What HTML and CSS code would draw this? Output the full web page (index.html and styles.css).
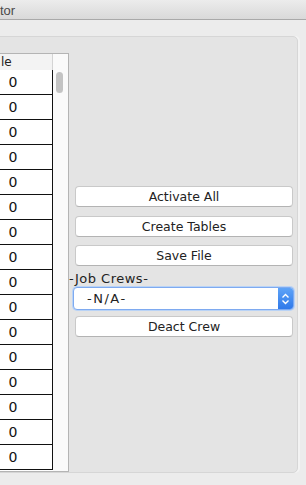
FILE: index.html
```html
<!DOCTYPE html>
<html lang="en">
<head>
  <meta charset="UTF-8" />
  <meta name="viewport" content="width=device-width, initial-scale=1.0"/>
  <title>Crew Editor</title>
  <link rel="stylesheet" href="styles.css">
</head>
<body>

<div class="titlebar">
  <span class="title">tor</span>
</div>

<div class="content">
  <div class="panel">

    <div class="table-box">
      <div class="cells" id="cells">
        <div class="head">le</div>
      </div>
      <div class="scroll">
        <div class="thumb"></div>
      </div>
    </div>

    <div class="controls">
      <button class="btn first">Activate All</button>
      <button class="btn second">Create Tables</button>
      <button class="btn">Save File</button>
      <div class="group-label">-Job Crews-</div>
      <div class="select">
        <span class="select-text">-N/A-</span>
        <span class="stepper">
          <svg width="9" height="14" viewBox="0 0 9 14">
            <path d="M1.5 5.5 L4.5 2.5 L7.5 5.5" fill="none" stroke="#fff" stroke-width="1.4"/>
            <path d="M1.5 8.5 L4.5 11.5 L7.5 8.5" fill="none" stroke="#fff" stroke-width="1.4"/>
          </svg>
        </span>
      </div>
      <button class="btn">Deact Crew</button>
    </div>

  </div>
</div>

<script>
  // fill the table rows
  const cells = document.getElementById('cells');
  for (let i = 0; i < 16; i++) {
    const row = document.createElement('div');
    row.className = 'cell';
    row.textContent = '0';
    cells.appendChild(row);
  }
</script>
</body>
</html>
```

FILE: styles.css
```css
body {
  font-family: "DejaVu Sans", sans-serif;
  background-color: #ececec;
  margin: 0;
  width: 306px;
  height: 485px;
  overflow: hidden;
  color: #222;
}
.titlebar {
  height: 19px;
  line-height: 19px;
  background: linear-gradient(#ececec, #d9d9d9);
  border-bottom: 1px solid #a9a9a9;
}
.title {
  font-family: "Liberation Sans", sans-serif;
  font-size: 13px;
  color: #4a4a4a;
}
.content {
  padding-top: 16px;
}
.panel {
  margin-left: -40px;
  width: 338px;
  height: 437px;
  box-sizing: border-box;
  border: 1px solid #d6d6d6;
  border-radius: 5px;
  background: #e4e4e4;
  box-shadow: 2px 0 0 #f3f3f3;
  padding: 16px 0 0 12px;
  display: flex;
  align-items: flex-start;
}
.table-box {
  display: flex;
  width: 96px;
  height: 419px;
  box-sizing: border-box;
  border: 1px solid #b4b4b4;
  background: #fbfbfb;
  overflow: hidden;
}
.cells {
  width: 79px;
  background: white;
}
.head {
  height: 16px;
  line-height: 16px;
  background: #f3f3f3;
  border-right: 1px solid #d4d4d4;
  padding-left: 27px;
  font-size: 12px;
}
.cell {
  height: 24px;
  line-height: 24px;
  border-bottom: 1px solid #111;
  border-right: 1px solid #111;
  text-align: center;
  font-size: 14px;
  color: #111;
}
.scroll {
  width: 15px;
  background: #fafafa;
}
.thumb {
  width: 7px;
  height: 21px;
  margin: 18px 0 0 3px;
  border-radius: 4px;
  background: #c3c3c3;
}
.controls {
  display: flex;
  flex-direction: column;
  padding-top: 133px;
}
.btn {
  font-family: "DejaVu Sans", sans-serif;
  font-size: 12.5px;
  color: #222;
  width: 218px;
  height: 21px;
  margin-left: 6px;
  padding: 0;
  background: white;
  border: 1px solid #c9c9c9;
  border-bottom-color: #b3b3b3;
  border-radius: 4px;
}
.first {
  margin-bottom: 9px;
}
.second {
  margin-bottom: 8px;
}
.group-label {
  height: 21px;
  line-height: 25px;
  font-size: 13px;
  letter-spacing: 0.5px;
}
.select {
  display: flex;
  align-items: stretch;
  width: 221px;
  height: 23px;
  margin: 0 0 6px 4px;
  box-sizing: border-box;
  border: 1px solid #7eaaf0;
  box-shadow: 0 0 0 1px #b9d3f6;
  border-radius: 4px;
  background: white;
}
.select-text {
  flex: 1;
  padding-left: 13px;
  line-height: 21px;
  font-size: 13px;
  letter-spacing: 1.5px;
}
.stepper {
  width: 15px;
  background: linear-gradient(#5ea3f7, #2f79ea);
  border-radius: 0 3px 3px 0;
  display: flex;
  align-items: center;
  justify-content: center;
}
```
